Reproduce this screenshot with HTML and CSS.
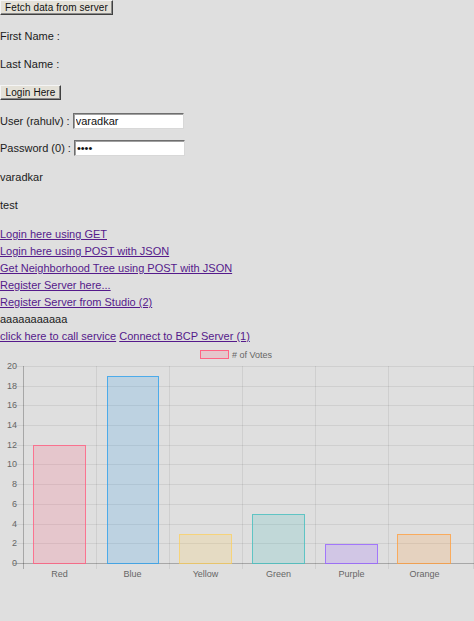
FILE: index.html
```html
<!DOCTYPE html>
<html>
<head>
<meta charset="utf-8">
<link rel="stylesheet" href="styles.css">
</head>
<body>
<div class="page">
  <button class="btn btn-fetch">Fetch data from server</button>
  <div class="line l-first">First Name :</div>
  <div class="line l-last">Last Name :</div>
  <button class="btn btn-login">Login Here</button>
  <div class="row r-user"><span>User (rahulv) :</span> <input class="inp" type="text" value="varadkar"></div>
  <div class="row r-pass"><span>Password (0) :</span> <input class="inp" type="password" value="test"></div>
  <div class="line l-name">varadkar</div>
  <div class="line l-test">test</div>
  <div class="links">
    <a href="#">Login here using GET</a>
    <a href="#">Login here using POST with JSON</a>
    <a href="#">Get Neighborhood Tree using POST with JSON</a>
    <a href="#">Register Server here...</a>
    <a href="#">Register Server from Studio (2)</a>
    <span>aaaaaaaaaaa</span>
    <span><a href="#">click here to call service</a> <a href="#">Connect to BCP Server (1)</a></span>
  </div>
  <svg class="chart" width="474" height="277" viewBox="0 0 474 277" xmlns="http://www.w3.org/2000/svg">
    <rect x="200.5" y="6.5" width="28" height="8" fill="rgba(255,99,132,0.2)" stroke="rgb(255,99,132)" stroke-width="1"/>
    <text x="232" y="13.5" class="lg"># of Votes</text>
    <g class="grid">
      <line x1="13" y1="22.5" x2="474" y2="22.5"/>
      <line x1="13" y1="42.5" x2="474" y2="42.5"/>
      <line x1="13" y1="61.5" x2="474" y2="61.5"/>
      <line x1="13" y1="81.5" x2="474" y2="81.5"/>
      <line x1="13" y1="101.5" x2="474" y2="101.5"/>
      <line x1="13" y1="120.5" x2="474" y2="120.5"/>
      <line x1="13" y1="140.5" x2="474" y2="140.5"/>
      <line x1="13" y1="160.5" x2="474" y2="160.5"/>
      <line x1="13" y1="180.5" x2="474" y2="180.5"/>
      <line x1="13" y1="199.5" x2="474" y2="199.5"/>
      <line x1="96.5" y1="22" x2="96.5" y2="225"/>
      <line x1="169.5" y1="22" x2="169.5" y2="225"/>
      <line x1="242.5" y1="22" x2="242.5" y2="225"/>
      <line x1="315.5" y1="22" x2="315.5" y2="225"/>
      <line x1="388.5" y1="22" x2="388.5" y2="225"/>
      <line x1="473.5" y1="22" x2="473.5" y2="225"/>
    </g>
    <g class="axis">
      <line x1="23.5" y1="22" x2="23.5" y2="225"/>
      <line x1="13" y1="219.5" x2="474" y2="219.5"/>
    </g>
    <g class="yl">
      <text x="17" y="25">20</text>
      <text x="17" y="45">18</text>
      <text x="17" y="64">16</text>
      <text x="17" y="84">14</text>
      <text x="17" y="104">12</text>
      <text x="17" y="123">10</text>
      <text x="17" y="143">8</text>
      <text x="17" y="163">6</text>
      <text x="17" y="183">4</text>
      <text x="17" y="202">2</text>
      <text x="17" y="222">0</text>
    </g>
    <rect x="33.5" y="101.5" width="52" height="118" fill="rgba(255,99,132,0.2)" stroke="rgba(255,99,132,0.85)"/>
    <rect x="107.5" y="32.5" width="51" height="187" fill="rgba(54,162,235,0.2)" stroke="rgba(54,162,235,0.85)"/>
    <rect x="179.5" y="190.5" width="52" height="29" fill="rgba(255,206,86,0.2)" stroke="rgba(255,206,86,0.7)"/>
    <rect x="252.5" y="170.5" width="52" height="49" fill="rgba(75,192,192,0.2)" stroke="rgba(75,192,192,0.85)"/>
    <rect x="325.5" y="200.5" width="52" height="19" fill="rgba(153,102,255,0.2)" stroke="rgba(153,102,255,0.85)"/>
    <rect x="397.5" y="190.5" width="53" height="29" fill="rgba(255,159,64,0.2)" stroke="rgba(255,159,64,0.8)"/>
    <g class="xl">
      <text x="59.5" y="233">Red</text>
      <text x="132.5" y="233">Blue</text>
      <text x="205.5" y="233">Yellow</text>
      <text x="278.5" y="233">Green</text>
      <text x="351.5" y="233">Purple</text>
      <text x="424.5" y="233">Orange</text>
    </g>
  </svg>
</div>
</body>
</html>
```
FILE: styles.css
```css
html, body {
  margin: 0;
  padding: 0;
  background: #dfdfdf;
  overflow: hidden;
}
.page {
  display: flex;
  flex-direction: column;
  align-items: flex-start;
  font-family: "Liberation Sans", Arial, sans-serif;
  font-size: 11px;
  color: #1b1b1b;
  width: 474px;
  height: 621px;
}
.btn {
  box-sizing: border-box;
  font-family: "Liberation Sans", Arial, sans-serif;
  font-size: 10px;
  letter-spacing: 0.1px;
  color: #111;
  height: 15px;
  padding: 0;
  margin: 0;
  white-space: nowrap;
  text-align: center;
  background: #e4e1d8;
  border-style: solid;
  border-width: 1px;
  border-color: #f4f4f4 #404040 #404040 #f4f4f4;
  box-shadow: inset -1px -1px 0 #8a8a8a;
  line-height: 12px;
}
.btn-fetch { width: 113px; }
.btn-login { width: 61px; margin-top: 14px; }
.line {
  height: 14px;
  line-height: 14px;
  margin-top: 14px;
}
.row {
  display: flex;
  align-items: center;
  height: 16px;
  gap: 3px;
}
.r-user { margin-top: 13px; }
.r-pass { margin-top: 11px; }
.inp {
  box-sizing: border-box;
  width: 111px;
  height: 16px;
  margin: 0;
  padding: 0 2px;
  font-family: "Liberation Sans", Arial, sans-serif;
  font-size: 11px;
  color: #111;
  background: #fff;
  border-style: solid;
  border-width: 1px;
  border-color: #6e6e6e #d8d8d8 #d8d8d8 #6e6e6e;
  box-shadow: inset 1px 1px 0 #a0a0a0;
  outline: none;
}
.l-name { margin-top: 14px; }
.links {
  display: flex;
  flex-direction: column;
  align-items: flex-start;
  line-height: 17px;
  margin-top: 14px;
}
.links a {
  color: #551a8b;
  text-decoration: underline;
}
.chart {
  display: block;
  margin-top: -1px;
}
.chart text {
  font-family: "Liberation Sans", Arial, sans-serif;
  font-size: 9px;
  fill: #666;
}
.chart .grid line {
  stroke: rgba(0, 0, 0, 0.07);
  stroke-width: 1;
}
.chart .axis line {
  stroke: rgba(0, 0, 0, 0.25);
  stroke-width: 1;
}
.chart .yl text { text-anchor: end; }
.chart .xl text { text-anchor: middle; }
```
